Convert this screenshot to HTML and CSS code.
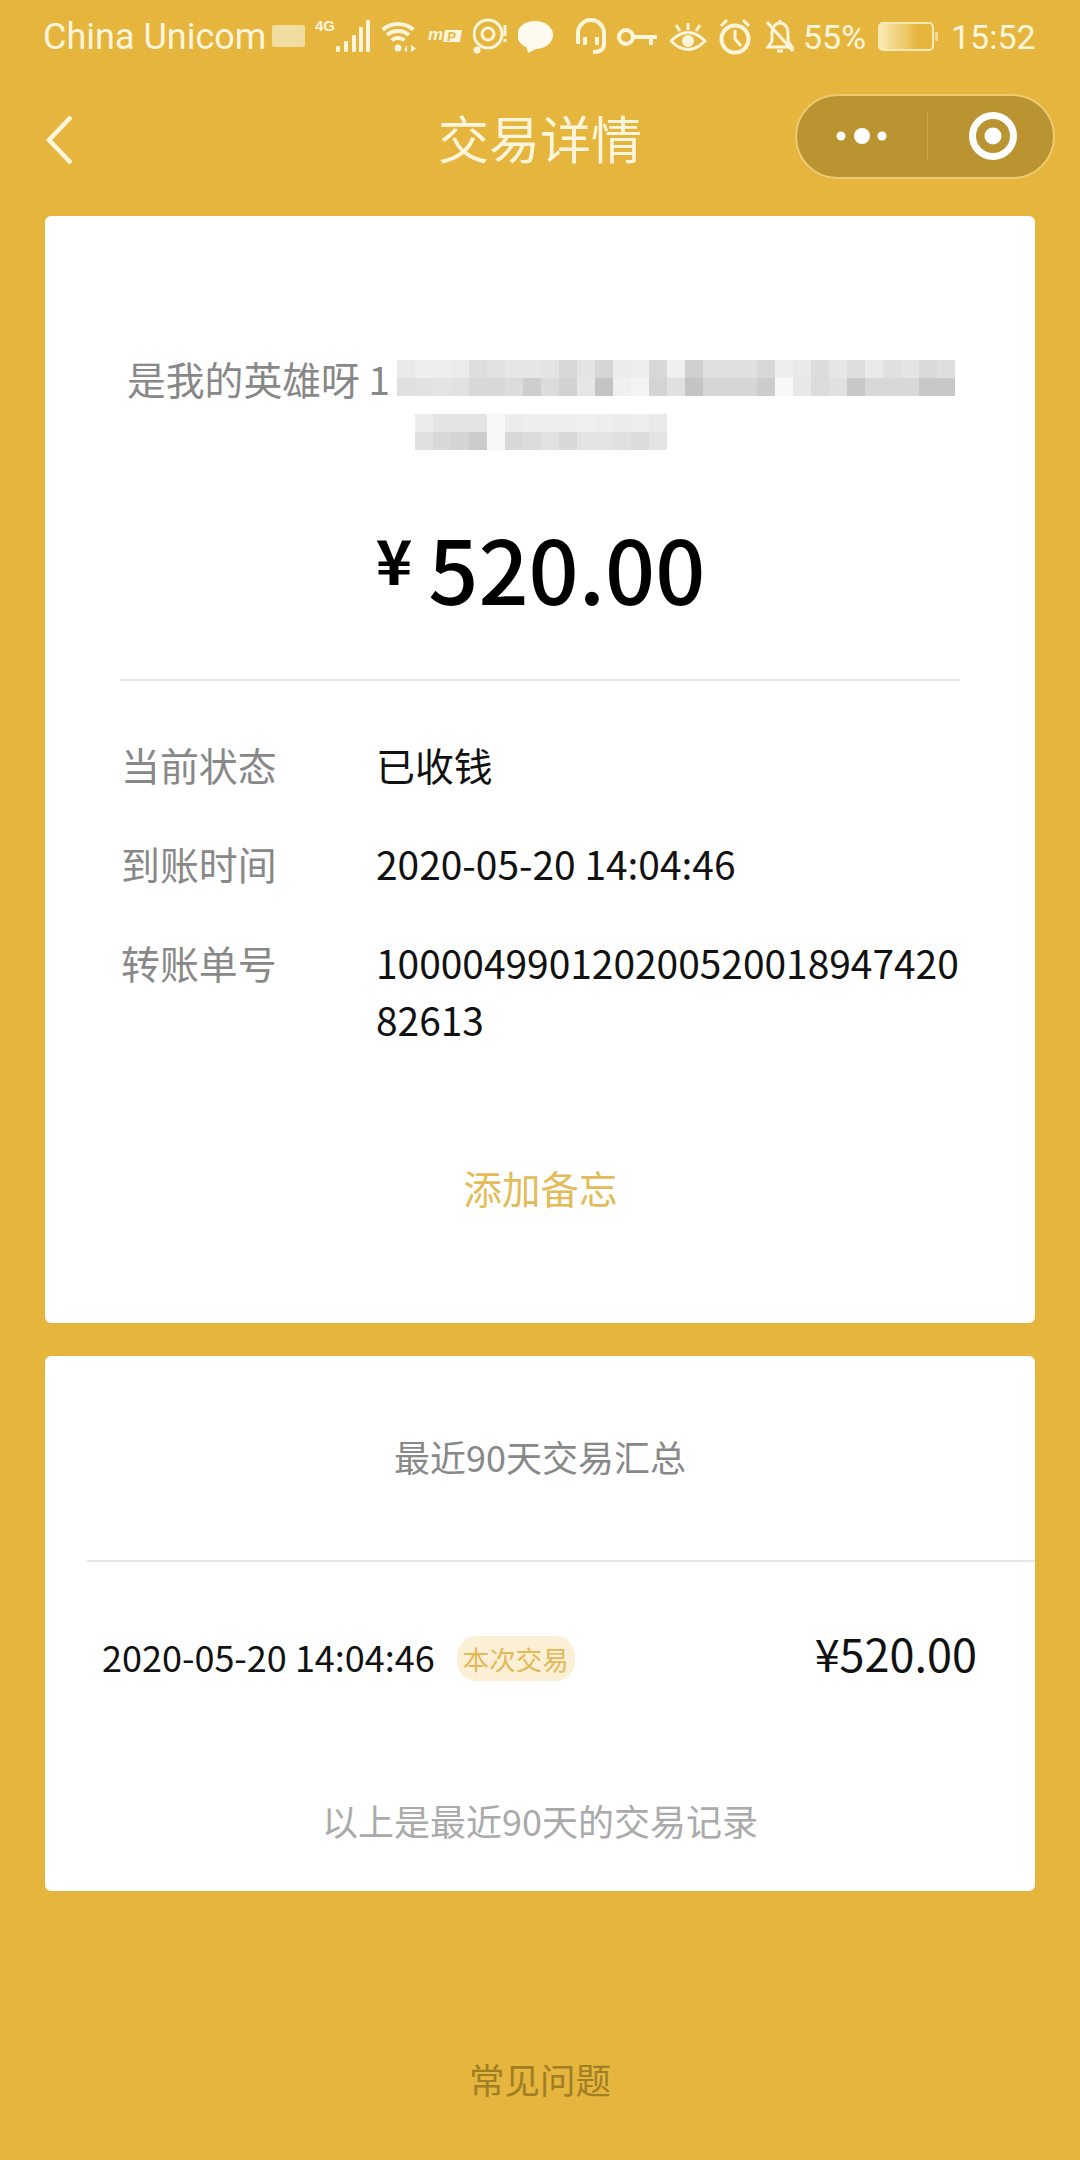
FILE: index.html
```html
<!DOCTYPE html>
<html lang="zh-CN">
<head>
<meta charset="UTF-8">
<meta name="viewport" content="width=device-width, initial-scale=1.0">
<title>交易详情</title>
<link rel="stylesheet" href="styles.css">
</head>
<body>
  <!-- status bar -->
  <div class="status-bar">
    <span class="carrier">China Unicom</span>
    <svg class="st-icon" width="43" height="44" viewBox="0 0 43 44"><rect class="sim" x="0" y="10" width="33" height="22" rx="2"/></svg>
    <svg class="st-icon" width="65" height="44" viewBox="0 0 65 44">
      <text class="tiny" x="0" y="16">4G</text>
      <rect x="21" y="31" width="4" height="6" rx="1"/><rect x="29" y="26" width="4" height="11" rx="1"/><rect x="37" y="20" width="4" height="17" rx="1"/><rect x="44" y="12" width="4" height="25" rx="1"/><rect x="51" y="5" width="4" height="32" rx="1"/>
    </svg>
    <svg class="st-icon" width="45" height="44" viewBox="0 0 45 44">
      <path class="line" d="M11.6 25.3A10 10 0 0 1 24.4 25.3M7.1 20A17 17 0 0 1 28.9 20M2.6 14.6A24 24 0 0 1 33.4 14.6"/>
      <circle cx="18" cy="33" r="3.5"/><path d="M27 30v7l-3-2zM31 30l5 3.500-5 3.500z"/>
    </svg>
    <svg class="st-icon" width="48" height="44" viewBox="0 0 48 44">
      <text class="tiny-m" x="3" y="25">m</text>
      <path d="M20 15h17l-2 12H18z"/>
      <text class="tiny-p" x="22" y="25.500">P</text>
    </svg>
    <svg class="st-icon" width="45" height="44" viewBox="0 0 45 44">
      <circle class="line-thin" cx="15" cy="19" r="14"/><circle class="line-thin" cx="15" cy="19" r="6"/>
      <circle cx="4" cy="35" r="3.500"/><path class="line-thin" d="M32 10v11M32 24v3"/>
    </svg>
    <svg class="st-icon" width="57" height="44" viewBox="0 0 57 44">
      <ellipse class="solid" cx="17" cy="20" rx="18" ry="14"/><path class="solid" d="M8 30l2 8 10-5z"/>
    </svg>
    <svg class="st-icon" width="42" height="44" viewBox="0 0 42 44">
      <path class="line" d="M3 29V18A13 13 0 0 1 29 18V29Q29 37 18 37"/>
      <path class="line" d="M10 22v8M22 22v8"/>
    </svg>
    <svg class="st-icon" width="53" height="44" viewBox="0 0 53 44">
      <circle class="line" cx="9" cy="22" r="7"/><path class="line" d="M16 22H40M34 22v8"/>
    </svg>
    <svg class="st-icon" width="47" height="44" viewBox="0 0 47 44">
      <path class="line-thin" d="M1 26Q18 9 35 26Q18 43 1 26z"/><circle cx="18" cy="26" r="6"/>
      <path class="line-thin" d="M18 8v7M6 10l4 6M30 10l-4 6"/>
    </svg>
    <svg class="st-icon" width="48" height="44" viewBox="0 0 48 44">
      <circle class="line" cx="18" cy="24" r="13.500"/><path class="line-thin" d="M18 15v9l6 7M4 11l6-6M32 11l-6-6"/>
    </svg>
    <svg class="st-icon" width="38" height="44" viewBox="0 0 38 44">
      <path class="line-thin" d="M3 32H27L23 26V17A8 9 0 0 0 7 17V26zM15 8V5M2 7L28 36M12 36h6"/>
    </svg>
    <span class="percent">55%</span>
    <svg class="st-icon" width="73" height="44" viewBox="0 0 73 44">
      <defs><linearGradient id="battFill"><stop offset="0" stop-color="#fbeebc"/><stop offset="0.5" stop-color="#f5dc90" stop-opacity="0.5"/><stop offset="0.7" stop-color="#f5dc90" stop-opacity="0"/></linearGradient></defs>
      <rect class="batt" x="1" y="8" width="54" height="27" rx="4"/>
      <rect x="57" y="17" width="3" height="9" rx="1" opacity="0.6"/>
    </svg>
    <span class="clock">15:52</span>
  </div>

  <!-- title bar -->
  <div class="nav-bar">
    <svg class="back" width="30" height="50" viewBox="0 0 30 50"><path d="M26 2L4 25L26 48"/></svg>
    <div class="nav-title">交易详情</div>
    <div class="capsule">
      <div class="capsule-part">
        <svg width="60" height="20" viewBox="0 0 60 20"><circle cx="9" cy="10" r="4.500"/><circle cx="30" cy="10" r="8"/><circle cx="50" cy="10" r="4.500"/></svg>
      </div>
      <div class="capsule-part">
        <svg width="50" height="50" viewBox="0 0 50 50"><circle class="ring" cx="25" cy="25" r="20.500"/><circle cx="25" cy="25" r="8.500"/></svg>
      </div>
    </div>
  </div>

  <div class="card card-main">
    <div class="payee">
      <div class="payee-line">
        <span class="payee-name">是我的英雄呀 1</span>
        <span class="mosaic mosaic-long"></span>
      </div>
      <div class="payee-line second">
        <span class="mosaic mosaic-short"></span>
      </div>
    </div>

    <div class="amount"><span class="yen">¥</span><span>520.00</span></div>
    <div class="rule"></div>

    <div class="info-row">
      <div class="info-label">当前状态</div>
      <div class="info-value">已收钱</div>
    </div>
    <div class="info-row">
      <div class="info-label">到账时间</div>
      <div class="info-value">2020-05-20 14:04:46</div>
    </div>
    <div class="info-row">
      <div class="info-label">转账单号</div>
      <div class="info-value">10000499012020052001894742082613</div>
    </div>

    <div class="memo">添加备忘</div>
  </div>

  <div class="card card-summary">
    <div class="summary-title">最近90天交易汇总</div>
    <div class="rule-right"></div>
    <div class="trade-row">
      <span class="trade-time">2020-05-20 14:04:46</span>
      <span class="trade-tag">本次交易</span>
      <span class="trade-money">¥520.00</span>
    </div>
    <div class="summary-note">以上是最近90天的交易记录</div>
  </div>

  <div class="faq">常见问题</div>
</body>
</html>
```

FILE: styles.css
```css
body {
  margin: 0;
  width: 1080px;
  height: 2160px;
  overflow: hidden;
  background: #e6b53e;
  font-family: "Noto Sans CJK SC", "Noto Sans", sans-serif;
  color: #111;
}

/* status bar */
.status-bar {
  display: flex;
  align-items: center;
  height: 74px;
  padding-left: 43px;
  color: #fdf5dc;
  font-family: Roboto, sans-serif;
  font-size: 34px;
}
.carrier {
  width: 229px;
  font-size: 36px;
  white-space: nowrap;
}
.percent {
  width: 75px;
}
.st-icon {
  flex: none;
  fill: #fdf5dc;
}
.sim {
  fill: #f2dda0;
}
.line {
  fill: none;
  stroke: #fdf5dc;
  stroke-width: 4;
}
.line-thin {
  fill: none;
  stroke: #fdf5dc;
  stroke-width: 3;
}
.solid {
  fill: #fffaf0;
}
.tiny {
  font-family: "Liberation Sans", sans-serif;
  font-size: 15px;
  font-weight: bold;
}
.tiny-m {
  font-family: "Liberation Sans", sans-serif;
  font-size: 17px;
  font-weight: bold;
  font-style: italic;
}
.tiny-p {
  font-family: "Liberation Sans", sans-serif;
  font-size: 13px;
  font-weight: bold;
  font-style: italic;
  fill: #e6b53e;
}
.batt {
  fill: url(#battFill);
  stroke: #f8e8b4;
  stroke-width: 2;
}

/* title bar */
.nav-bar {
  display: grid;
  grid-template-columns: 1fr auto 1fr;
  align-items: center;
  height: 132px;
  margin-bottom: 10px;
  padding: 0 25px;
}
.back {
  margin-left: 20px;
  fill: none;
  stroke: #fdf5dc;
  stroke-width: 4.500;
}
.nav-title {
  margin-bottom: 6px;
  color: #fdf5dc;
  font-size: 51px;
  line-height: 60px;
}
.capsule {
  justify-self: end;
  display: flex;
  align-items: center;
  box-sizing: border-box;
  width: 260px;
  height: 85px;
  margin-bottom: 8px;
  background: #b99431;
  border: 2px solid #eecb72;
  border-radius: 43px;
}
.capsule-part {
  display: flex;
  justify-content: center;
  align-items: center;
  flex: 1;
  height: 50px;
}
.capsule-part:first-child {
  flex: none;
  width: 130px;
  border-right: 1px solid #cfa846;
}
.capsule-part:last-child {
  padding-left: 4px;
}
.capsule-part svg {
  fill: #fff;
}
.capsule-part .ring {
  fill: none;
  stroke: #fff;
  stroke-width: 7;
}

/* cards */
.card {
  margin: 0 45px;
  background: #fff;
  border-radius: 6px;
}
.card-main {
  padding: 144px 75px 107px 76px;
}
.card-summary {
  margin-top: 33px;
  padding: 75px 0 46px;
}

/* blurred payee */
.payee-line {
  display: flex;
  align-items: center;
  height: 36px;
  margin-left: 6px;
}
.payee-line.second {
  margin: 18px 0 0 294px;
}
.payee-name {
  flex: none;
  color: #888;
  font-size: 38.800px;
  white-space: nowrap;
}
.mosaic {
  display: block;
  flex: none;
  height: 36px;
  background-repeat: no-repeat;
  background-size: 100% 18px;
}
.mosaic-long {
  width: 576px;
  margin-left: -11px;
  background-position: top, bottom;
  background-image:
    linear-gradient(90deg, transparent 0 18px, #eaeaea 18px 36px, #eee 36px 72px, #ececec 72px 90px, #dedede 90px 108px, #e2e2e2 108px 126px, #e6e6e6 126px 162px, #e4e4e4 162px 180px, #d8d8d8 180px 198px, #e4e4e4 198px 216px, #d6d6d6 216px 234px, #ececec 234px 252px, #eee 252px 270px, #d8d8d8 270px 288px, #f0f0f0 288px 306px, #cfcfcf 306px 324px, #e0e0e0 324px 378px, #d8d8d8 378px 396px, #eee 396px 414px, #eaeaea 414px 432px, #dcdcdc 432px 450px, #e6e6e6 450px 468px, #dedede 468px 486px, #eaeaea 486px 504px, #e0e0e0 504px 522px, #e4e4e4 522px 540px, #dadada 540px 558px, #dedede 558px 576px),
    linear-gradient(90deg, transparent 0 18px, #e0e0e0 18px 36px, #e2e2e2 36px 54px, #e4e4e4 54px 72px, #e2e2e2 72px 90px, #d8d8d8 90px 126px, #dcdcdc 126px 144px, #cecece 144px 162px, #dcdcdc 162px 180px, #d2d2d2 180px 198px, #e6e6e6 198px 216px, #c4c4c4 216px 234px, #f0f0f0 234px 252px, #f4f4f4 252px 270px, #d4d4d4 270px 288px, #e0e0e0 288px 306px, #c4c4c4 306px 324px, #d6d6d6 324px 378px, #ccc 378px 396px, #f8f8f8 396px 414px, #e8e8e8 414px 432px, #dcdcdc 432px 450px, #e0e0e0 450px 468px, #c8c8c8 468px 486px, #d8d8d8 486px 540px, #c8c8c8 540px 576px);
}
.mosaic-short {
  width: 252px;
  background-position: top, bottom;
  background-image:
    linear-gradient(90deg, #ececec 0 18px, #e4e4e4 18px 72px, #f8f8f8 72px 90px, #ececec 90px 108px, #eee 108px 162px, #f0f0f0 162px 180px, #eee 180px 198px, #ececec 198px 216px, #eee 216px 234px, #eaeaea 234px 252px),
    linear-gradient(90deg, #e0e0e0 0 18px, #d8d8d8 18px 36px, #d4d4d4 36px 54px, #ccc 54px 72px, #f8f8f8 72px 90px, #d8d8d8 90px 108px, #dcdcdc 108px 126px, #e2e2e2 126px 144px, #d8d8d8 144px 162px, #e4e4e4 162px 198px, #e0e0e0 198px 216px, #dcdcdc 216px 234px, #e4e4e4 234px 252px);
}

/* amount */
.amount {
  display: flex;
  justify-content: center;
  align-items: baseline;
  margin-top: 67px;
  font-size: 88px;
  font-weight: 500;
  line-height: 100px;
  color: #000;
}
.yen {
  margin-right: 16px;
  font-size: 62px;
  font-weight: 700;
  position: relative;
  top: -20px;
}
.rule {
  height: 2px;
  margin-top: 51px;
  background: #e5e5e5;
}

/* info rows */
.info-row {
  display: flex;
  margin: 42px -6px 0 0;
  font-size: 38.900px;
  line-height: 57px;
}
.rule + .info-row {
  margin-top: 55px;
}
.info-label {
  flex: none;
  width: 255px;
  color: #888;
}
.info-value {
  flex: 1;
  word-break: break-all;
}
.memo {
  margin-top: 110px;
  color: #e3bb58;
  font-size: 38.500px;
  line-height: 58px;
  text-align: center;
}

/* summary */
.summary-title {
  color: #888;
  font-size: 36px;
  line-height: 50px;
  text-align: center;
}
.rule-right {
  height: 2px;
  margin: 79px 0 0 42px;
  background: #e8e8e8;
}
.trade-row {
  display: flex;
  align-items: center;
  height: 60px;
  margin-top: 64px;
  padding: 0 58px 0 57px;
}
.trade-time {
  font-size: 36px;
}
.trade-tag {
  margin: 4px 0 0 22px;
  padding: 0 6px;
  background: #fbf0d6;
  border-radius: 20px;
  color: #e3b858;
  font-size: 26.500px;
  line-height: 45px;
}
.trade-money {
  margin-left: auto;
  font-size: 45px;
  position: relative;
  top: -4px;
}
.summary-note {
  margin-top: 109px;
  color: #aaa;
  font-size: 36px;
  line-height: 50px;
  text-align: center;
}
.faq {
  margin-top: 163px;
  color: #a07f24;
  font-size: 35.500px;
  line-height: 50px;
  text-align: center;
}
```
